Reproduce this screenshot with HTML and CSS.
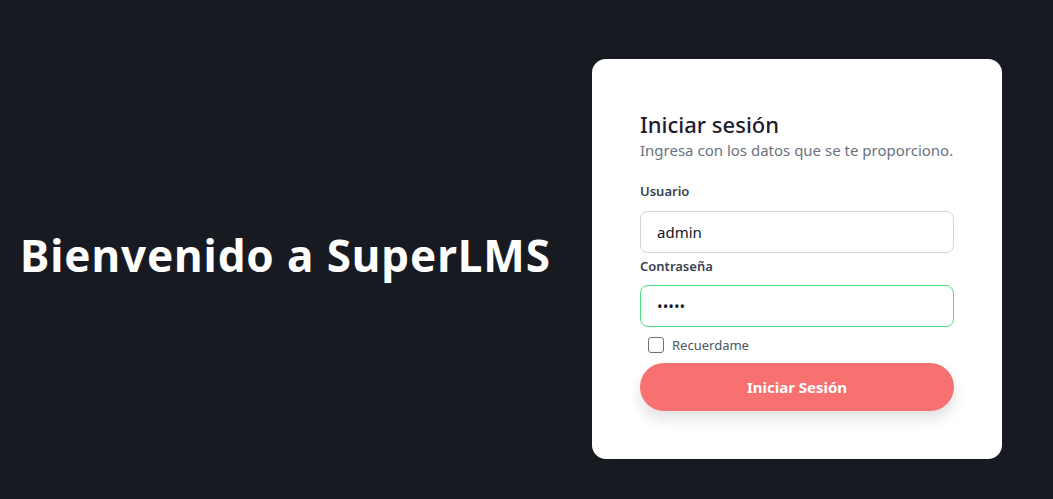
FILE: index.html
```html
<!DOCTYPE html>
<html lang="es">
<head>
<meta charset="utf-8">
<title>SuperLMS</title>
<link rel="stylesheet" href="styles.css">
</head>
<body>
<main class="page">
  <section class="hero">
    <h1 class="hero-title">Bienvenido a SuperLMS</h1>
  </section>
  <section class="card">
    <h2 class="card-title">Iniciar sesión</h2>
    <p class="card-sub">Ingresa con los datos que se te proporciono.</p>
    <form class="form">
      <label class="label" for="user">Usuario</label>
      <input class="input" id="user" type="text" value="admin">
      <label class="label label-pass" for="pass">Contraseña</label>
      <input class="input input-focus" id="pass" type="password" value="admin">
      <label class="remember"><span class="check"></span>Recuerdame</label>
      <button class="btn" type="button">Iniciar Sesión</button>
    </form>
  </section>
</main>
</body>
</html>
```
FILE: styles.css
```css
* { box-sizing: border-box; }
html, body { margin: 0; padding: 0; }
body {
  background: #181a22;
  font-family: "Noto Sans", "Open Sans", sans-serif;
  width: 1053px;
  height: 499px;
  overflow: hidden;
}
.page {
  display: flex;
  align-items: flex-start;
  padding: 59px 51px 0 20px;
}
.hero {
  flex: 1;
  padding-top: 168px;
}
.hero-title {
  margin: 0;
  color: #ffffff;
  font-size: 44px;
  font-weight: 700;
  line-height: 56px;
  letter-spacing: 0.9px;
  white-space: nowrap;
}
.card {
  width: 410px;
  height: 400px;
  background: #ffffff;
  border-radius: 14px;
  padding: 50px 48px 0 48px;
}
.card-title {
  margin: 0;
  font-size: 22px;
  font-weight: 500;
  color: #1e1b2e;
  line-height: 30px;
}
.card-sub {
  margin: 0;
  font-size: 15px;
  letter-spacing: 0;
  white-space: nowrap;
  color: #6b7280;
  line-height: 22px;
}
.form {
  display: flex;
  flex-direction: column;
  margin-top: 20px;
}
.label {
  font-size: 13px;
  font-weight: 600;
  color: #374151;
  line-height: 20px;
  margin-bottom: 10px;
}
.label-pass { margin-top: 3px; margin-bottom: 9px; }
.input {
  width: 314px;
  height: 42px;
  border: 1px solid #d1d5db;
  border-radius: 8px;
  padding: 0 16px;
  font-family: inherit;
  font-size: 15px;
  color: #111827;
  outline: none;
}
.input-focus { border-color: #4ade80; }
.remember {
  display: flex;
  align-items: center;
  gap: 8px;
  margin: 9px 0 0 8px;
  font-size: 13px;
  color: #4b5563;
  line-height: 18px;
}
.check {
  width: 16px;
  height: 16px;
  border: 1px solid #6b7280;
  border-radius: 3px;
  background: #fff;
}
.btn {
  margin-top: 9px;
  width: 314px;
  height: 48px;
  border: none;
  border-radius: 24px;
  background: #f87171;
  color: #ffffff;
  font-family: inherit;
  font-size: 15px;
  font-weight: 700;
  box-shadow: 0 8px 14px rgba(0,0,0,0.12);
}
```
